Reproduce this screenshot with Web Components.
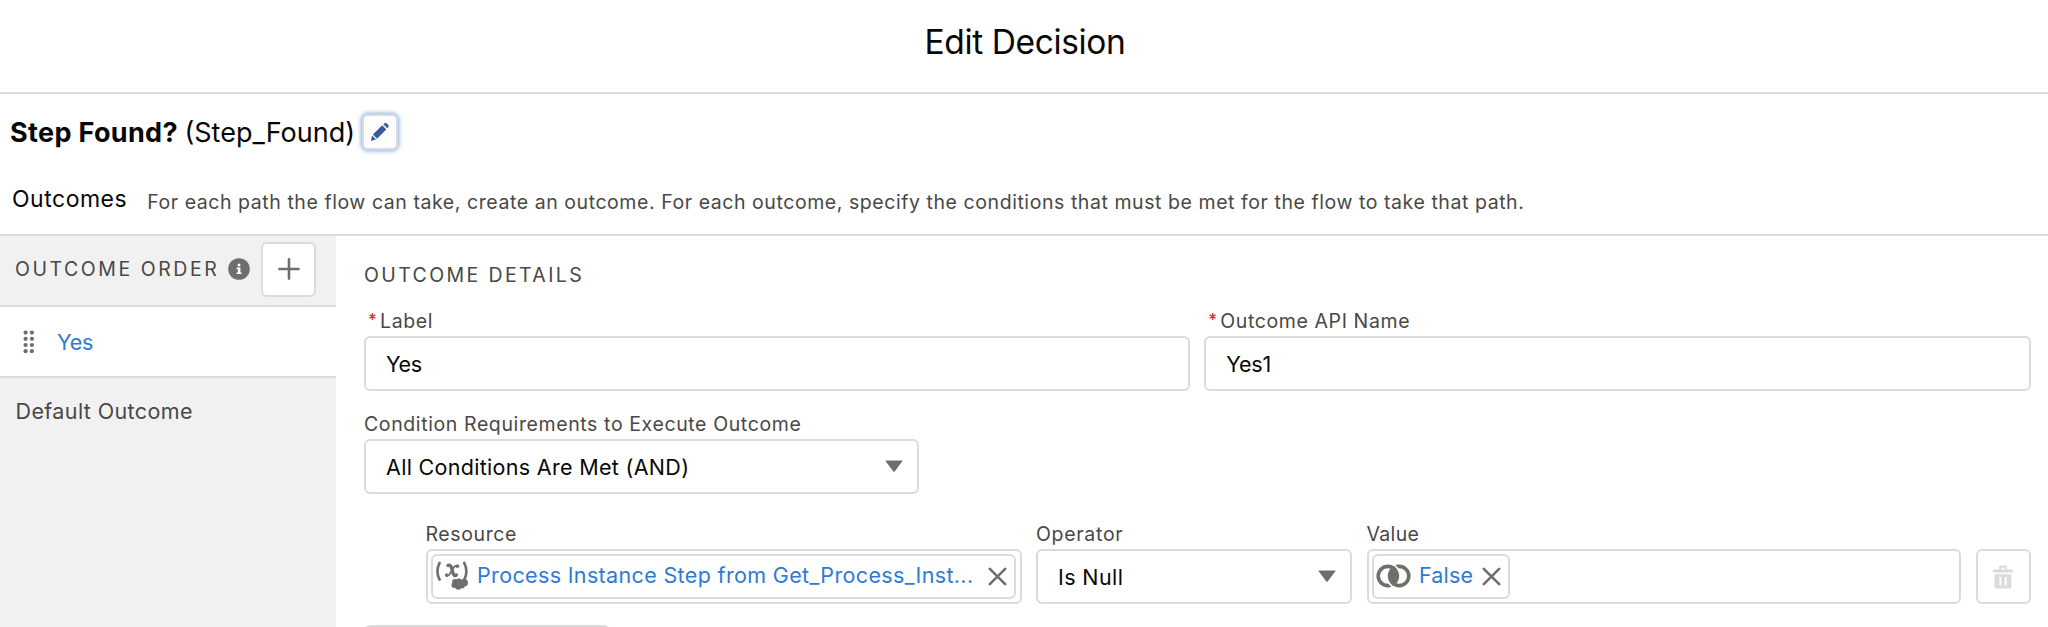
<!DOCTYPE html>
<html lang="en">
<head>
<meta charset="utf-8">
<title>Edit Decision</title>
<style>
	html, body {
		margin: 0;
		height: 100%;
		overflow: hidden;
	}
	body {
		background: #fff;
		font-family: Inter, "Liberation Sans", sans-serif;
		--line: #dddbda;
		--icon: #706e6b;
		--link: #2f7ad4;
		--weak: #484846;
		--text: #080707;
	}
</style>
</head>
<body>
<decision-editor></decision-editor>
<script>
var icons = {
	pencil: `<svg width='20' height='20' viewBox='0 0 20 20' fill='#3a5c9b'>
		<path d='M2.9 12.5 L12.2 3.3 L16.3 7.4 L7 16.7 Z'/>
		<path d='M13.3 2.3 L14.5 1.2 Q15.5 0.4 16.5 1.3 L18.3 3.1 Q19.2 4.1 18.4 5 L17.3 6.3 Z'/>
		<path d='M2.1 13.5 L6 17.4 L1.6 18.7 Q0.8 18.9 1 18.1 Z'/>
	</svg>`,
	info: `<svg width='22' height='22' viewBox='0 0 22 22'>
		<circle cx='11' cy='11' r='10.8' fill='#706e6b'/>
		<circle cx='11' cy='6.9' r='1.5' fill='#fff'/>
		<path d='M8.7 9.6 h3.7 v5 h1.2 v1.5 h-5 v-1.5 h1.3 v-3.4 h-1.2 z' fill='#fff'/>
	</svg>`,
	plus: `<svg width='22' height='22' viewBox='0 0 22 22' stroke='#706e6b' stroke-width='2.6' stroke-linecap='round'>
		<path d='M1.4 11 H20.6 M11 1.4 V20.6'/>
	</svg>`,
	grip: `<svg width='12' height='24' viewBox='0 0 12 24' fill='#706e6b'>
		<circle cx='2.6' cy='2.6' r='2.1'/><circle cx='8.9' cy='2.6' r='2.1'/>
		<circle cx='2.6' cy='8.8' r='2.1'/><circle cx='8.9' cy='8.8' r='2.1'/>
		<circle cx='2.6' cy='15' r='2.1'/><circle cx='8.9' cy='15' r='2.1'/>
		<circle cx='2.6' cy='21.2' r='2.1'/><circle cx='8.9' cy='21.2' r='2.1'/>
	</svg>`,
	close: `<svg width='19' height='19' viewBox='0 0 19 19' stroke='#706e6b' stroke-width='2.6' stroke-linecap='round'>
		<path d='M1.8 1.8 L17.2 17.2 M17.2 1.8 L1.8 17.2'/>
	</svg>`,
	trash: `<svg width='22' height='24' viewBox='0 0 22 24' fill='#dddbda'>
		<path d='M7 5 V2.6 Q7 0.6 9 0.6 H13 Q15 0.6 15 2.6 V5 H12.8 V2.8 H9.2 V5 Z'/>
		<rect x='0.8' y='4.4' width='20.4' height='3' rx='1'/>
		<path fill-rule='evenodd' d='M2.6 9.2 H19.4 V21.4 Q19.4 23.6 17.2 23.6 H4.8 Q2.6 23.6 2.6 21.4 Z M7.4 12 V20.4 H9.3 V12 Z M12.7 12 V20.4 H14.6 V12 Z'/>
	</svg>`,
	// record variable: brackets, a curly x and a cloud below
	variable: `<svg width='34' height='30' viewBox='0 0 34 30' fill='none' stroke='#706e6b' stroke-linecap='round'>
		<path d='M4.6 1.8 Q0.2 10.2 4.6 18.6' stroke-width='2.6'/>
		<path d='M29.2 1.8 Q33.6 10.2 29.2 18.6' stroke-width='2.6'/>
		<path d='M13 4.4 Q15.4 3.4 16.4 6.4 L18.2 12.6 Q19 15.6 21.4 14' stroke-width='3.4'/>
		<path d='M22.2 5 Q20.6 3.8 18.6 6.8 L15.4 12 Q13.4 15.4 11.6 14.4' stroke-width='1.8'/>
		<circle cx='22.4' cy='5.2' r='1.4' fill='#706e6b'/><circle cx='11.8' cy='14.2' r='1.4' fill='#706e6b'/>
		<g fill='#706e6b' stroke='none'>
			<circle cx='20' cy='20.8' r='2.8'/><circle cx='24' cy='20.6' r='3.2'/>
			<circle cx='29.2' cy='21.8' r='3.8'/><circle cx='19.4' cy='24' r='2.9'/>
			<circle cx='23.2' cy='25.8' r='2.9'/><circle cx='27' cy='24.8' r='2.7'/>
			<circle cx='23.4' cy='23.4' r='3'/>
		</g>
	</svg>`,
	// boolean: two rings with the overlap filled
	rings: `<svg width='35' height='24' viewBox='0 0 35 24' fill='none' stroke='#706e6b' stroke-width='3.6'>
		<circle cx='11.8' cy='12' r='9.6'/>
		<circle cx='23.2' cy='12' r='9.6'/>
		<path d='M17.5 3.3 A10.4 10.4 0 0 1 17.5 20.7 A10.4 10.4 0 0 1 17.5 3.3 Z' fill='#706e6b' stroke='none'/>
		<path d='M15.9 0.1 A12.5 12.5 0 0 1 22 5' stroke='#fff' stroke-width='1.6'/>
		<path d='M19.1 23.9 A12.5 12.5 0 0 1 13 19' stroke='#fff' stroke-width='1.6'/>
	</svg>`,
	arrow: `<svg width='18' height='13' viewBox='0 0 18 13' fill='#706e6b'>
		<path d='M1 0.5 H17 Q17.8 0.5 17.3 1.3 L9.7 11.6 Q9 12.5 8.3 11.6 L0.7 1.3 Q0.2 0.5 1 0.5 Z'/>
	</svg>`
}
function build(el, style, html) {
	var shadow = el.attachShadow({mode:'open'})
	shadow.innerHTML = `<style>
* { box-sizing: border-box; }
svg { display: block; flex: none; }
${style}
</style>${html}`
}
class SvgIcon extends HTMLElement {
	connectedCallback() {
		build(this, `:host { display: block; flex: none; }`, icons[this.getAttribute('name')])
	}
}
customElements.define('svg-icon', SvgIcon)

class IconButton extends HTMLElement {
	connectedCallback() {
		build(this, `
:host {
	display: block;
	flex: none;
	width: 55px;
	height: 55px;
}
button {
	display: flex;
	align-items: center;
	justify-content: center;
	width: 100%;
	height: 100%;
	padding: 0;
	background: #fff;
	border: 2px solid var(--line);
	border-radius: 6px;
}
:host([focused]) button {
	box-shadow: 0 0 4px 1px #7fb0ee;
}`, `<button><slot></slot></button>`)
	}
}
customElements.define('icon-button', IconButton)

class ModalHeader extends HTMLElement {
	connectedCallback() {
		build(this, `
:host {
	display: block;
	height: 94px;
	border-bottom: 2px solid var(--line);
	text-align: center;
	color: var(--text);
}
h1 {
	margin: 0;
	padding-left: 2px;
	font-size: 33.5px;
	font-weight: 400;
	line-height: 85px;
	letter-spacing: -0.37px;
}`, `<h1><slot></slot></h1>`)
	}
}
customElements.define('modal-header', ModalHeader)

class ElementTitle extends HTMLElement {
	connectedCallback() {
		build(this, `
:host {
	display: flex;
	align-items: center;
	height: 76px;
	padding-left: 10px;
	font-size: 27px;
	color: var(--text);
}
b { letter-spacing: 0.34px; }
span { margin-left: 6.5px; }
icon-button {
	width: 36px;
	height: 36px;
	margin-left: 6.5px;
}`, `<b>${this.getAttribute('label')}</b>
<span>(${this.getAttribute('api-name')})</span>
<icon-button focused><svg-icon name='pencil'></svg-icon></icon-button>`)
	}
}
customElements.define('element-title', ElementTitle)

class OutcomeIntro extends HTMLElement {
	connectedCallback() {
		build(this, `
:host {
	display: flex;
	height: 66px;
	padding-left: 12px;
	border-bottom: 2px solid var(--line);
}
h2 {
	margin: 0;
	font-size: 23px;
	font-weight: 400;
	line-height: 59px;
	letter-spacing: 0.5px;
	color: var(--text);
}
p {
	margin: 0 0 0 20px;
	font-size: 19.5px;
	line-height: 65px;
	letter-spacing: 0.562px;
	color: var(--weak);
}`, `<h2>${this.getAttribute('heading')}</h2><p><slot></slot></p>`)
	}
}
customElements.define('outcome-intro', OutcomeIntro)

class OutcomeNav extends HTMLElement {
	connectedCallback() {
		build(this, `
:host {
	display: block;
	background: #f2f1f1;
	color: var(--weak);
}
header {
	display: flex;
	align-items: center;
	height: 71px;
	padding: 0 20px 3px 15px;
	border-bottom: 2px solid var(--line);
}
h3 {
	flex: 1;
	margin: 0;
	font-size: 19.5px;
	font-weight: 400;
	line-height: 30px;
	letter-spacing: 2.55px;
	white-space: nowrap;
}
icon-button { margin-left: 11px; }`, `<header>
<h3>OUTCOME ORDER</h3>
<svg-icon name='info'></svg-icon>
<icon-button><svg-icon name='plus'></svg-icon></icon-button>
</header>
<slot></slot>`)
	}
}
customElements.define('outcome-nav', OutcomeNav)

class OutcomeItem extends HTMLElement {
	connectedCallback() {
		build(this, `
:host {
	display: flex;
	align-items: center;
	height: 66px;
	padding-left: 15.5px;
	font-size: 21.5px;
	letter-spacing: 0.39px;
}
svg-icon { display: none; }
:host([selected]) {
	height: 71px;
	padding-left: 23px;
	border-bottom: 2px solid var(--line);
	background: #fff;
	color: var(--link);
	letter-spacing: -0.3px;
}
:host([selected]) svg-icon {
	display: block;
	margin-right: 22px;
}`, `<svg-icon name='grip'></svg-icon><slot></slot>`)
	}
}
customElements.define('outcome-item', OutcomeItem)

class FormField extends HTMLElement {
	connectedCallback() {
		build(this, `
:host { display: block; min-width: 0; }
label {
	display: flex;
	height: 30px;
	font-size: 19.5px;
	line-height: 30px;
	letter-spacing: var(--label-spacing, 0.61px);
	color: var(--weak);
	white-space: nowrap;
}
i {
	width: 16px;
	padding-left: 4px;
	font-size: 17px;
	font-style: normal;
	font-weight: 500;
	line-height: 28px;
	letter-spacing: 0;
	color: #e02b2b;
}
.box {
	display: flex;
	align-items: center;
	height: 55px;
	padding: 0 14px 0 20px;
	background: #fff;
	border: 2px solid var(--line);
	border-radius: 6px;
	font-size: 21.5px;
	letter-spacing: var(--value-spacing, 0.31px);
	white-space: nowrap;
	color: var(--text);
}
.box svg-icon { margin-left: auto; }
:host([lookup]) .box { padding: 0 3px; }`, `<label>${this.hasAttribute('required') ? '<i>*</i>' : ''}${this.getAttribute('label')}</label>
<div class='box'><slot></slot>${this.hasAttribute('select') ? "<svg-icon name='arrow'></svg-icon>" : ''}</div>`)
	}
}
customElements.define('form-field', FormField)

class ValuePill extends HTMLElement {
	connectedCallback() {
		build(this, `
:host {
	display: flex;
	align-items: center;
	height: 45px;
	padding: 0 7px 0 2px;
	border: 2px solid var(--line);
	border-radius: 6px;
	color: var(--link);
}
span {
	flex: 1;
	padding: 0 0 3px 8.5px;
}
svg-icon { margin-bottom: 1px; }`, `<svg-icon name='${this.getAttribute('icon')}'></svg-icon>
<span><slot></slot></span>
<svg-icon name='close'></svg-icon>`)
	}
}
customElements.define('value-pill', ValuePill)

class OutcomeDetails extends HTMLElement {
	connectedCallback() {
		build(this, `
:host {
	display: block;
	min-width: 0;
	padding: 21px 17.5px 0 28px;
}
h3 {
	margin: 0 0 12px;
	font-size: 19.5px;
	font-weight: 400;
	line-height: 37px;
	letter-spacing: 2.38px;
	color: var(--weak);
}
.names {
	display: grid;
	grid-template-columns: 1fr 1fr;
	column-gap: 14px;
}
.logic {
	width: 554.5px;
	margin-top: 18px;
}
.condition {
	display: grid;
	grid-template-columns: 596px 316px 1fr 55px;
	column-gap: 14.5px;
	align-items: end;
	margin: 25px 0 21px;
	padding-left: 61.5px;
}
.resource { --label-spacing: 0.6px; --value-spacing: 0.35px; }
.resource value-pill { width: 585px; }
.operator { --label-spacing: 0.7px; --value-spacing: 0.4px; }
.value { --label-spacing: 0.33px; --value-spacing: 0.15px; }
.value value-pill { width: 138px; }
.add {
	display: block;
	width: 246px;
	height: 55px;
	background: #fff;
	border: 2px solid var(--line);
	border-radius: 6px;
}`, `<h3>OUTCOME DETAILS</h3>
<div class='names'>
	<form-field label='Label' required style='--value-spacing: -0.4px'>Yes</form-field>
	<form-field label='Outcome API Name' required style='--value-spacing: -0.2px'>Yes1</form-field>
</div>
<form-field class='logic' label='Condition Requirements to Execute Outcome' select>All Conditions Are Met (AND)</form-field>
<div class='condition'>
	<form-field class='resource' label='Resource' lookup>
		<value-pill icon='variable'>Process Instance Step from Get_Process_Inst...</value-pill>
	</form-field>
	<form-field class='operator' label='Operator' select>Is Null</form-field>
	<form-field class='value' label='Value' lookup>
		<value-pill icon='rings'>False</value-pill>
	</form-field>
	<icon-button><svg-icon name='trash'></svg-icon></icon-button>
</div>
<button class='add'></button>`)
	}
}
customElements.define('outcome-details', OutcomeDetails)

class DecisionEditor extends HTMLElement {
	connectedCallback() {
		build(this, `
:host {
	display: flex;
	flex-direction: column;
	height: 100vh;
	overflow: hidden;
}
modal-header, element-title, outcome-intro { flex: none; }
main {
	flex: 1;
	min-height: 0;
	display: grid;
	grid-template-columns: 336px 1fr;
}`, `<modal-header>Edit Decision</modal-header>
<element-title label='Step Found?' api-name='Step_Found'></element-title>
<outcome-intro heading='Outcomes'>For each path the flow can take, create an outcome. For each outcome, specify the conditions that must be met for the flow to take that path.</outcome-intro>
<main>
	<outcome-nav>
		<outcome-item selected>Yes</outcome-item>
		<outcome-item>Default Outcome</outcome-item>
	</outcome-nav>
	<outcome-details></outcome-details>
</main>`)
	}
}
customElements.define('decision-editor', DecisionEditor)
</script>
</body>
</html>
